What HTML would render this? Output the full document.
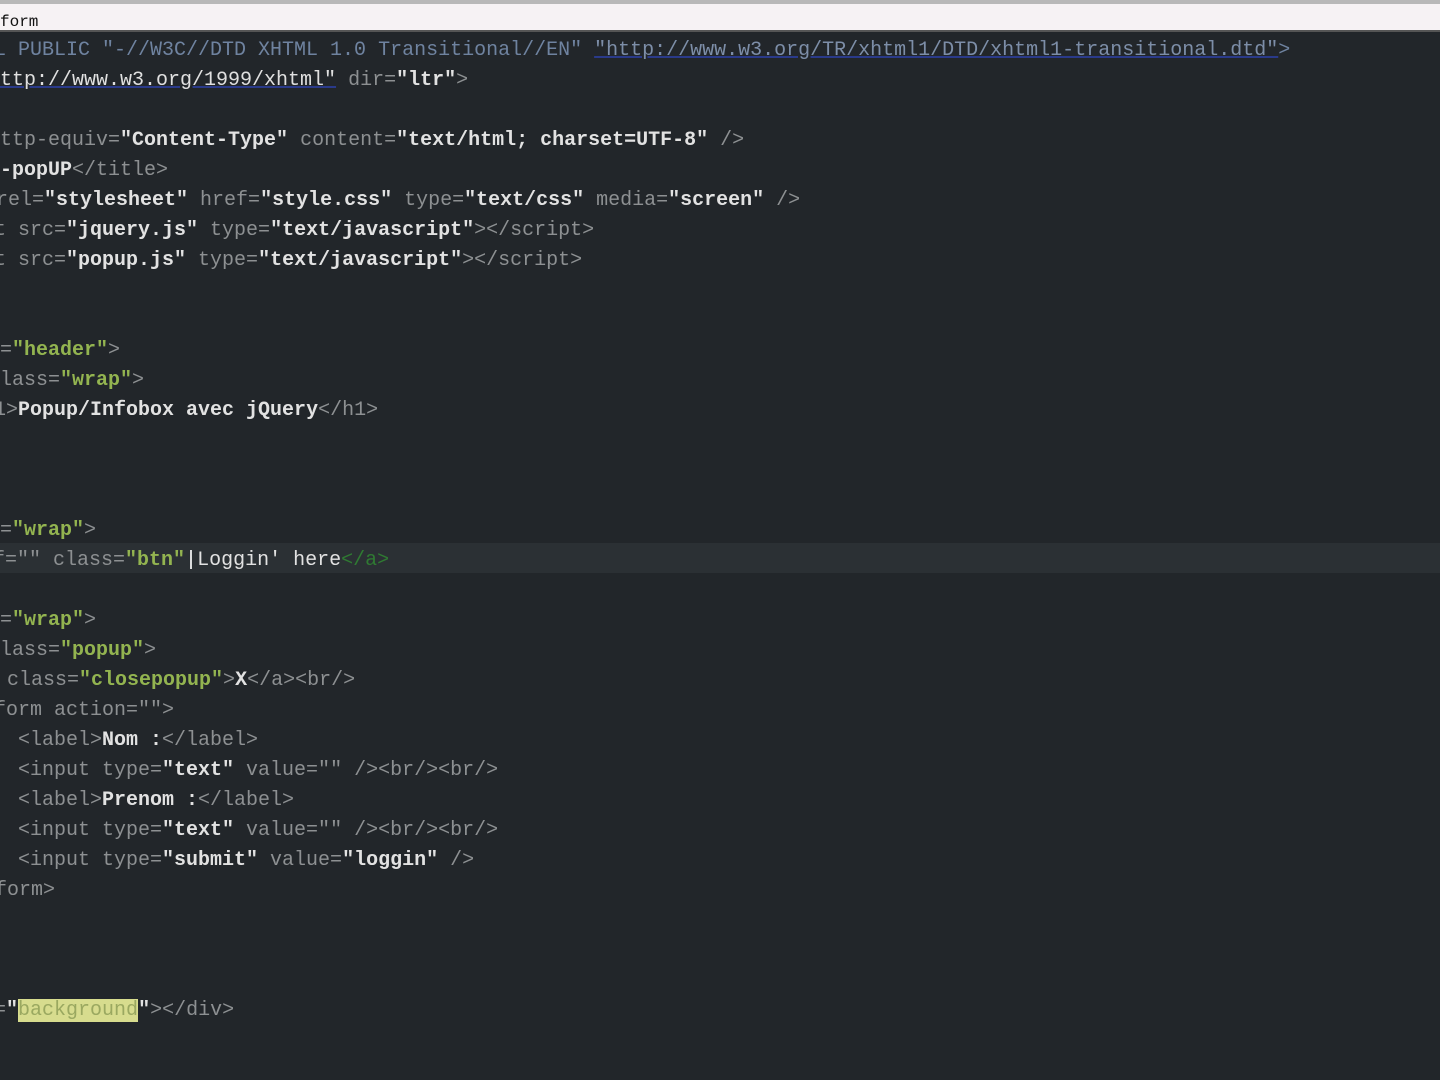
<!DOCTYPE html>
<html><head><meta charset="utf-8"><style>
body{margin:0;width:1440px;height:1080px;background:#22262a;overflow:hidden;position:relative;font-family:"Liberation Mono",monospace;}
.top{position:absolute;left:0;top:0;width:1440px;height:32px;background:#f6f2f4;border-top:4px solid #b8b8b8;box-sizing:border-box;border-bottom:2px solid #555;}
.top span{position:absolute;left:0;top:9px;font-size:16px;color:#111;}
.w{position:absolute;left:0;top:3px;}
.l{position:absolute;font-size:20px;line-height:30px;height:30px;white-space:pre;color:#8d9092;}
.b{color:#e2e2e2;font-weight:bold}
.g{color:#93b450}
.d{color:#6f83a0}
.u{color:#7d8ea8;text-decoration:underline;text-decoration-color:#2a3a8a}
.hl{position:absolute;left:0;top:543px;width:1440px;height:30px;background:#2b3034;}
.y{background:#d7dc8e;color:#9aa860}
</style></head><body>
<div class="top"><span>form</span></div>
<div class="hl"></div>
<div class="w">
<div class="l d" style="top:33px;left:-6px">L PUBLIC "-//W3C//DTD XHTML 1.0 Transitional//EN" <span class="u">"http://www.w3.org/TR/xhtml1/DTD/xhtml1-transitional.dtd"</span>&gt;</div>
<div class="l" style="top:63px;left:0"><span class="u" style="color:#e0e0e0">ttp://www.w3.org/1999/xhtml"</span> dir=<span class="b">"ltr"</span>&gt;</div>
<div class="l" style="top:123px;left:-12px">http-equiv=<span class="b">"Content-Type"</span> content=<span class="b">"text/html; charset=UTF-8"</span> /&gt;</div>
<div class="l" style="top:153px;left:0"><span class="b">-popUP</span>&lt;/title&gt;</div>
<div class="l" style="top:183px;left:-4px">rel=<span class="b">"stylesheet"</span> href=<span class="b">"style.css"</span> type=<span class="b">"text/css"</span> media=<span class="b">"screen"</span> /&gt;</div>
<div class="l" style="top:213px;left:-6px">t src=<span class="b">"jquery.js"</span> type=<span class="b">"text/javascript"</span>&gt;&lt;/script&gt;</div>
<div class="l" style="top:243px;left:-6px">t src=<span class="b">"popup.js"</span> type=<span class="b">"text/javascript"</span>&gt;&lt;/script&gt;</div>
<div class="l" style="top:333px;left:0">=<span class="g b">"header"</span>&gt;</div>
<div class="l" style="top:363px;left:-12px">class=<span class="g b">"wrap"</span>&gt;</div>
<div class="l" style="top:393px;left:-18px">h1&gt;<span class="b">Popup/Infobox avec jQuery</span>&lt;/h1&gt;</div>
<div class="l" style="top:513px;left:0">=<span class="g b">"wrap"</span>&gt;</div>
<div class="l" style="top:543px;left:-7px">f="" class=<span class="g b">"btn"</span><span style="color:#fff">|</span><span class="b" style="font-weight:normal">Loggin' here</span><span style="color:#2f7a32">&lt;/a&gt;</span></div>
<div class="l" style="top:603px;left:0">=<span class="g b">"wrap"</span>&gt;</div>
<div class="l" style="top:633px;left:-12px">class=<span class="g b">"popup"</span>&gt;</div>
<div class="l" style="top:663px;left:-5px"> class=<span class="g b">"closepopup"</span>&gt;<span class="b">X</span>&lt;/a&gt;&lt;br/&gt;</div>
<div class="l" style="top:693px;left:-6px">form action=""&gt;</div>
<div class="l" style="top:723px;left:18px">&lt;label&gt;<span class="b">Nom :</span>&lt;/label&gt;</div>
<div class="l" style="top:753px;left:18px">&lt;input type=<span class="b">"text"</span> value="" /&gt;&lt;br/&gt;&lt;br/&gt;</div>
<div class="l" style="top:783px;left:18px">&lt;label&gt;<span class="b">Prenom :</span>&lt;/label&gt;</div>
<div class="l" style="top:813px;left:18px">&lt;input type=<span class="b">"text"</span> value="" /&gt;&lt;br/&gt;&lt;br/&gt;</div>
<div class="l" style="top:843px;left:18px">&lt;input type=<span class="b">"submit"</span> value=<span class="b">"loggin"</span> /&gt;</div>
<div class="l" style="top:873px;left:-5px">form&gt;</div>
<div class="l" style="top:993px;left:-6px">=<span class="b">"</span><span class="y">background</span><span class="b">"</span>&gt;&lt;/div&gt;</div>
</div>
</body></html>
